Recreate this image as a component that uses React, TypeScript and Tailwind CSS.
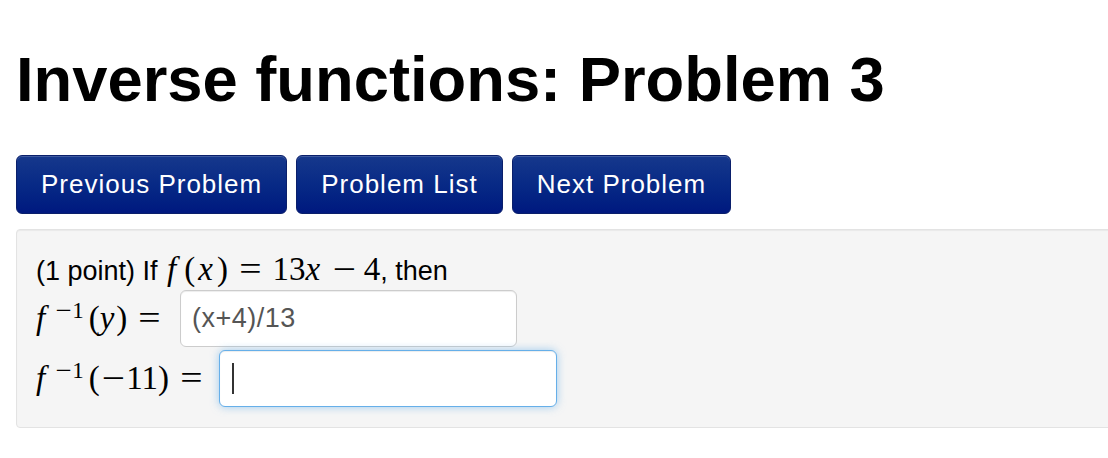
import React from 'react';

function M({ children }: { children: React.ReactNode }) {
  return <span className="[font-family:'Liberation_Serif','Times_New_Roman',serif] text-[33px]">{children}</span>;
}

function V({ children, className = '' }: { children: React.ReactNode; className?: string }) {
  return <span className={`italic ${className}`}>{children}</span>;
}

// wide TeX-style equals / minus
function Eq({ className = '' }: { className?: string }) {
  return <span className={`inline-block scale-x-[1.2] ${className}`}>=</span>;
}

function Minus({ className = '' }: { className?: string }) {
  return <span className={`inline-block scale-x-[1.25] ${className}`}>−</span>;
}

function FInv() {
  return (
    <>
      <V>f</V>
      <sup className="text-[23px] ml-[12px] mr-[5px]">
        <Minus className="mr-[2px]" />1
      </sup>
    </>
  );
}

function NavButton({ label }: { label: string }) {
  return (
    <button className="h-[59px] px-[24px] flex items-center rounded-[6px] border border-[#0a1f6b] bg-gradient-to-b from-[#16388c] to-[#00187f] text-white text-[26px] tracking-[1px] shadow-[inset_0_1px_0_rgba(255,255,255,0.18)]">
      {label}
    </button>
  );
}

export default function App() {
  return (
    <div className="w-full overflow-hidden bg-white [font-family:'Liberation_Sans',Arial,sans-serif] text-black">
      <div className="pl-[16px] pt-[48px] pb-[30px]">
        <h1 className="text-[63.3px] font-bold leading-none">Inverse functions: Problem 3</h1>

        <div className="flex gap-[9px] mt-[44px]">
          <NavButton label="Previous Problem" />
          <NavButton label="Problem List" />
          <NavButton label="Next Problem" />
        </div>

        {/* problem body */}
        <div className="mt-[15px] mr-[-40px] bg-[#f5f5f5] border border-[#e3e3e3] rounded-[4px] shadow-[inset_0_1px_1px_rgba(0,0,0,0.05)] pl-[19px] pt-[19px] pb-[20px] text-[27px]">
          <div className="h-[40px] leading-[40px] whitespace-nowrap">
            (1 point) If{' '}
            <M>
              <V className="ml-[2px] mr-[8px]">f</V>(<V className="ml-[3px] mr-[4px]">x</V>)
              <Eq className="ml-[13px] mr-[13px]" />
              13<V className="mr-[1px]">x</V>
              <Minus className="ml-[14px] mr-[10px]" />4
            </M>
            , then
          </div>

          <div className="mt-[1px] h-[57px] flex items-center">
            <M>
              <FInv />(<V className="mr-[2px]">y</V>)<Eq className="ml-[13px]" />
            </M>
            <input
              readOnly
              value="(x+4)/13"
              className="ml-[21px] w-[337px] h-[57px] px-[11px] bg-white border border-[#cccccc] rounded-[6px] text-[27px] tracking-[0.5px] text-[#555555] outline-none shadow-[inset_0_1px_1px_rgba(0,0,0,0.075)]"
            />
          </div>

          <div className="mt-[3px] h-[57px] flex items-center">
            <M>
              <FInv />(<Minus className="mx-[4px]" />11)<Eq className="ml-[13px]" />
            </M>
            <div className="relative ml-[18px]">
              <input
                readOnly
                value=""
                className="w-[338px] h-[57px] px-[11px] bg-white border border-[#66afe9] rounded-[6px] text-[27px] text-[#555555] outline-none shadow-[inset_0_1px_1px_rgba(0,0,0,0.075),0_0_8px_rgba(102,175,233,0.6)]"
              />
              <span className="absolute left-[13px] top-[13px] w-[2px] h-[31px] bg-[#333333]" />
            </div>
          </div>
        </div>
      </div>
    </div>
  );
}
